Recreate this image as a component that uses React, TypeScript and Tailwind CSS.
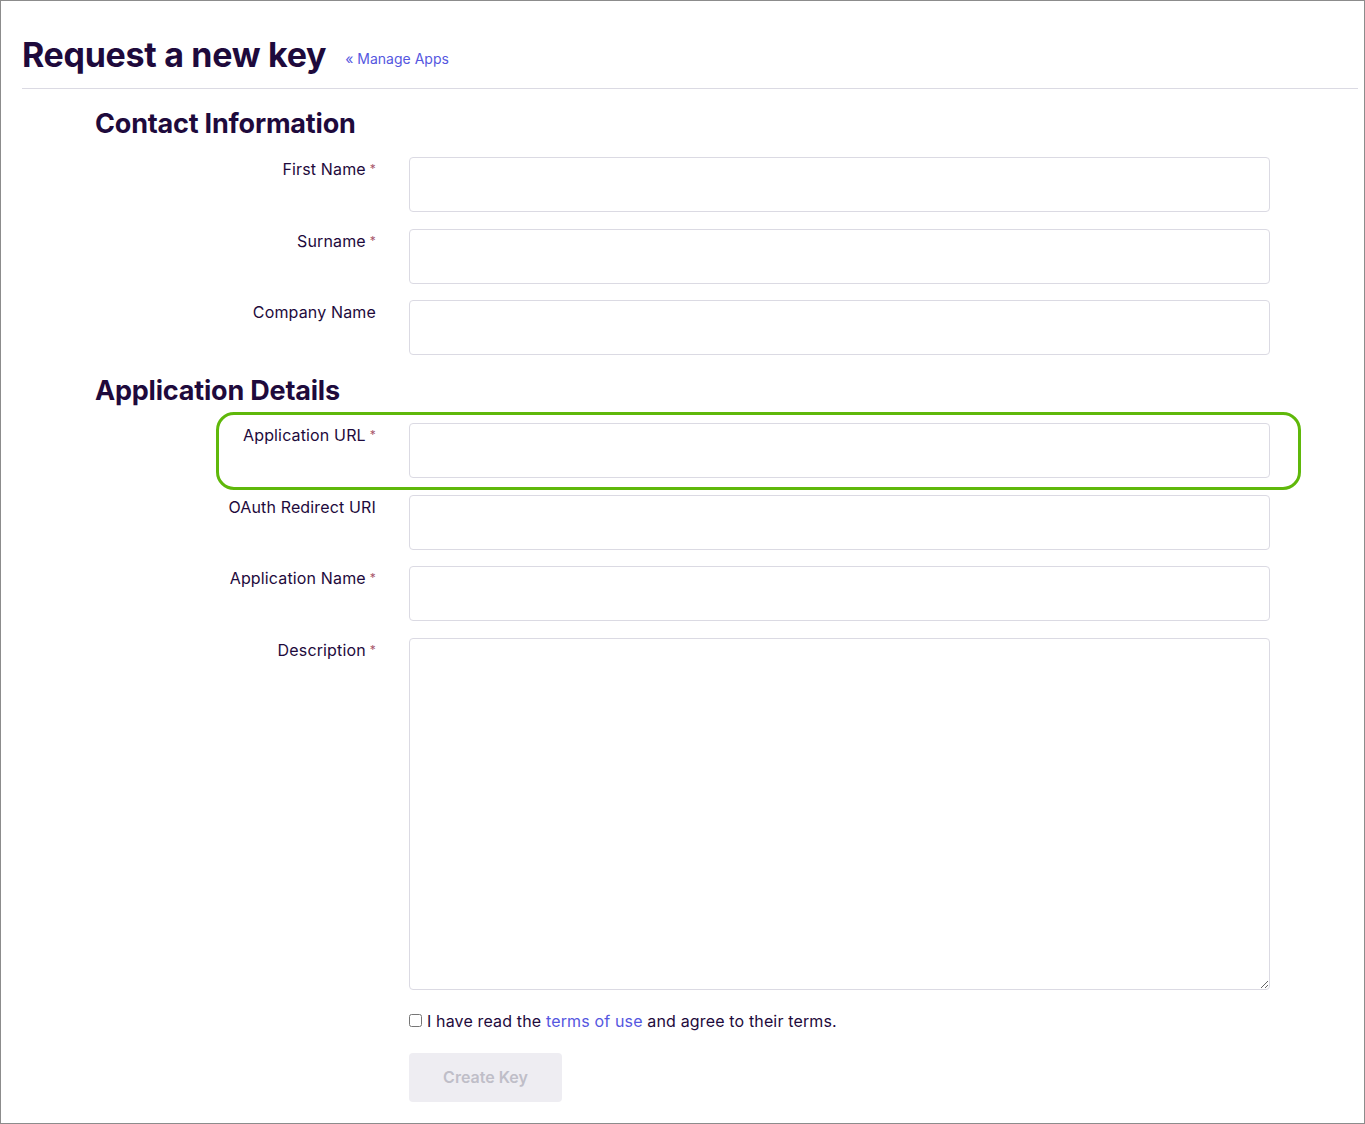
import React from "react";

const Req = () => <sup className="ml-[4px] text-[12px] text-[#a8566a] relative top-[-2px]">*</sup>;

function Row({ label, req, h = 55, textarea = false }: { label: string; req?: boolean; h?: number; textarea?: boolean }) {
  return (
    <div className="flex items-start">
      <div className="w-[375px] shrink-0 text-right text-[16px] leading-[24px] tracking-[0.15px] text-[#1e0a3c]">
        {label}
        {req ? <Req /> : null}
      </div>
      <div className="ml-[33px]">
        {textarea ? (
          <textarea className="block w-[861px] border border-[#dbdae3] rounded-[4px] resize-y" style={{ height: h }} />
        ) : (
          <input className="block w-[861px] border border-[#dbdae3] rounded-[4px]" style={{ height: h }} />
        )}
      </div>
    </div>
  );
}

export default function App() {
  return (
    <div
      className="relative w-[1365px] h-[1124px] border border-[#8c8c8c] bg-white overflow-hidden"
      style={{ fontFamily: "Inter, 'Open Sans', sans-serif" }}
    >
      <div className="pl-[21px] pr-[6px]">
        <div className="flex items-baseline pt-[33px] pb-[12px] border-b border-[#dbdae3]">
          <h1 className="text-[34px] leading-[42px] font-bold tracking-[-0.3px] text-[#1e0a3c]">Request a new key</h1>
          <a className="ml-[19px] text-[14px] text-[#5557df] relative top-[-3px]">« Manage Apps</a>
        </div>
      </div>
      <div className="pl-[94px] pt-[18px]">
        <h2 className="text-[27px] leading-[34px] font-bold tracking-[-0.2px] text-[#1e0a3c]">Contact Information</h2>
      </div>
      <div className="flex flex-col gap-[16.5px] mt-[16px]">
        <Row label="First Name" req />
        <Row label="Surname" req />
        <Row label="Company Name" />
      </div>
      <div className="pl-[94px] pt-[19px]">
        <h2 className="text-[27px] leading-[34px] font-bold tracking-[-0.2px] text-[#1e0a3c]">Application Details</h2>
      </div>
      <div className="flex flex-col gap-[16.5px] mt-[15px]">
        <Row label="Application URL" req />
        <Row label="OAuth Redirect URI" />
        <Row label="Application Name" req />
        <Row label="Description" req h={352} textarea />
      </div>
      <div className="ml-[408px] mt-[19px] flex items-center text-[16px] tracking-[0.15px] text-[#1e0a3c]">
        <input type="checkbox" className="w-[13px] h-[13px] m-0 mr-[5px]" />
        <span>
          I have read the <a className="text-[#5557df]">terms of use</a> and agree to their terms.
        </span>
      </div>
      <div className="ml-[408px] mt-[20px]">
        <button className="w-[153px] h-[49px] rounded-[4px] bg-[#eeedf2] text-[#bfbec8] text-[16px] font-semibold">Create Key</button>
      </div>
      <div className="absolute left-[215px] top-[411px] w-[1085px] h-[78px] border-[3px] border-[#5fb80a] rounded-[18px] pointer-events-none" />
    </div>
  );
}
